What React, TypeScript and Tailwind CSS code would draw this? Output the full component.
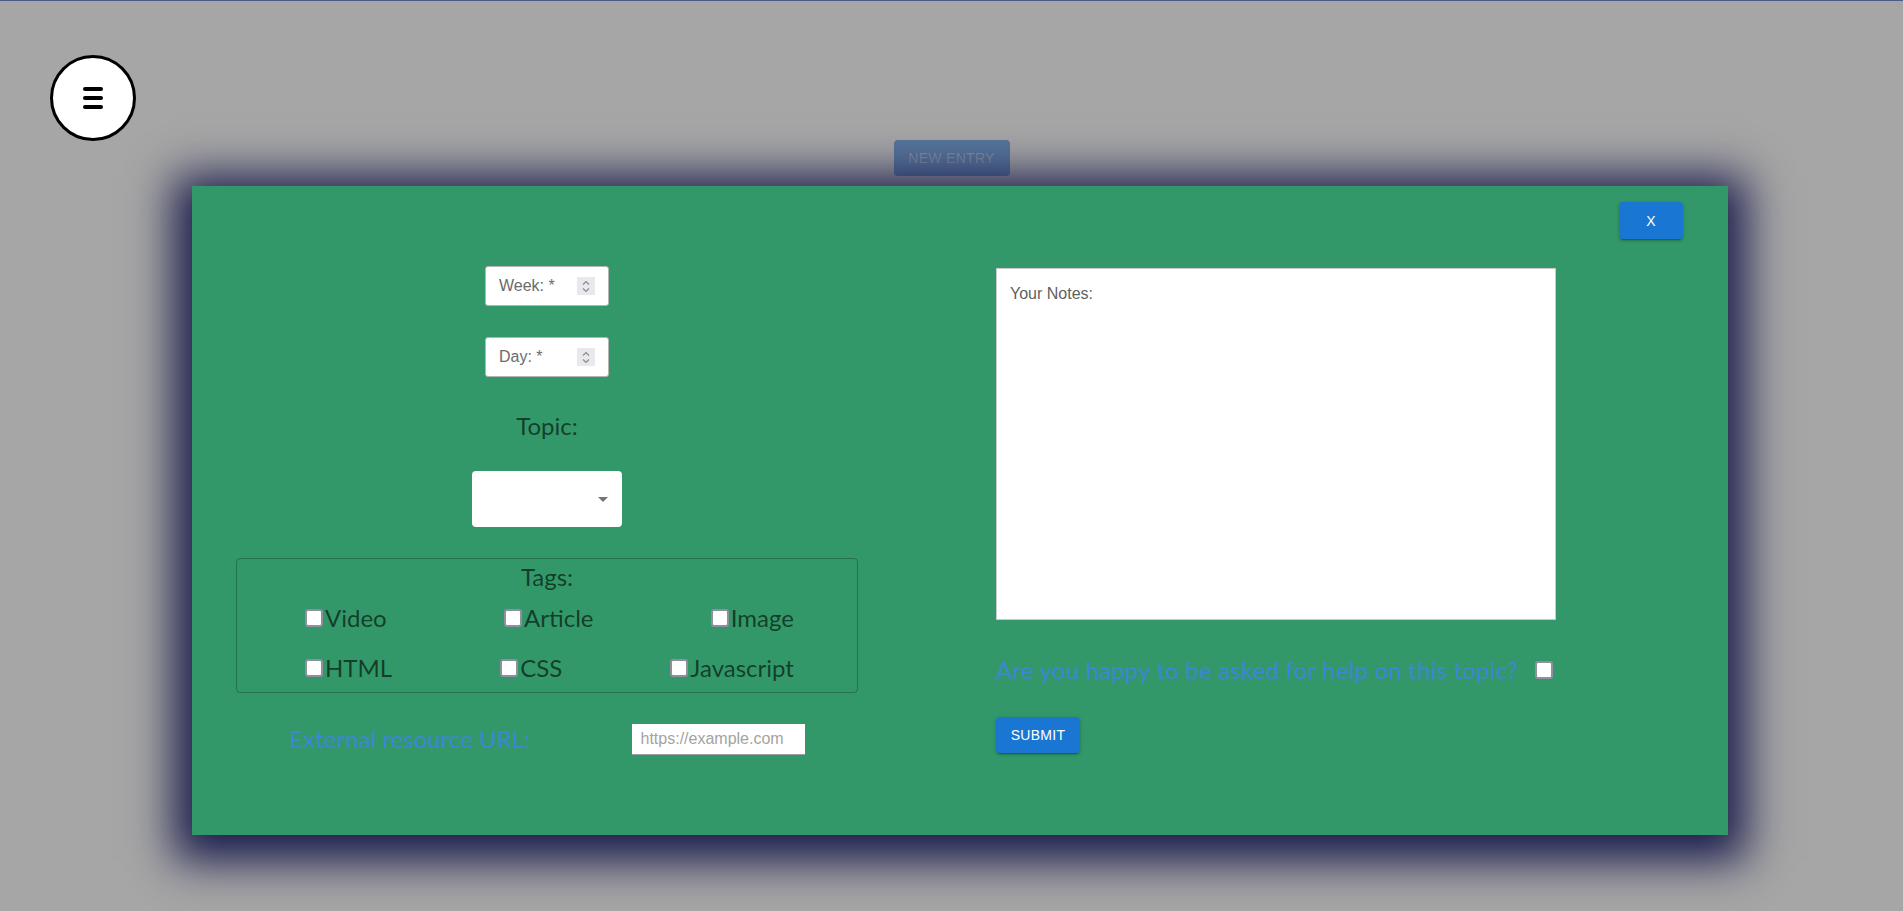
import React from 'react';

const segoe = "font-['Lato','Noto_Sans',sans-serif]";
const arial = "font-['Liberation_Sans',Arial,sans-serif]";
const muiBtn =
  "font-['Liberation_Sans',Arial,sans-serif] text-sm uppercase tracking-[0.3px] rounded bg-[#1976d2] text-white shadow-[0_3px_1px_-2px_rgba(0,0,0,0.2),0_2px_2px_0_rgba(0,0,0,0.14),0_1px_5px_0_rgba(0,0,0,0.12)]";

const Spinner = () => (
  <span className="flex h-[18px] w-[18px] items-center justify-center bg-[#e9e9ed]">
    <svg width="8" height="13" viewBox="0 0 8 13" fill="none" stroke="#8a8a8a" strokeWidth="1.2">
      <path d="M1 4.5 L4 1.5 L7 4.5" />
      <path d="M1 8.5 L4 11.5 L7 8.5" />
    </svg>
  </span>
);

const NumberField = ({ label }: { label: string }) => (
  <div className="flex h-10 w-[124px] items-center rounded-[3px] border border-[#b5b5b5] bg-white pl-[13px] pr-[13px]">
    <input
      type="text"
      placeholder={label}
      className={`${arial} w-0 flex-1 bg-transparent text-base text-[#555] placeholder:text-[#6b6b6b] outline-none`}
    />
    <Spinner />
  </div>
);

const Check = () => (
  <input
    type="checkbox"
    className="h-[18px] w-[18px] shrink-0 appearance-none rounded-[3px] border-2 border-[#8f8f9d] bg-white"
  />
);

const Tag = ({ label }: { label: string }) => (
  <label className="flex items-center">
    <Check />
    <span className="ml-[2px]">{label}</span>
  </label>
);

export default function App() {
  return (
    <div className="relative h-[911px] w-full overflow-hidden bg-[#a6a6a6]">
      <div className="h-px bg-[#4b5a82]" />

      <button className="absolute left-[50px] top-[55px] flex h-[86px] w-[86px] flex-col items-center justify-center gap-[5px] rounded-full border-[3px] border-black bg-white">
        <span className="h-1 w-5 rounded-full bg-black" />
        <span className="h-1 w-5 rounded-full bg-black" />
        <span className="h-1 w-5 rounded-full bg-black" />
      </button>

      <div className="mt-[139px] flex justify-center">
        <button className="h-9 w-[116px] rounded bg-[#57769a] font-['Liberation_Sans',Arial,sans-serif] text-sm uppercase tracking-[0.3px] text-[#8590a2]">
          New Entry
        </button>
      </div>

      <div className="absolute left-[192px] top-[186px] h-[649px] w-[1536px] bg-[#329869] shadow-[0_8px_42px_18px_rgba(26,28,76,1)]">
        <div className="flex justify-end pr-[45px] pt-4">
          <button className={`${muiBtn} h-[37px] w-16`}>X</button>
        </div>

        <div className="mt-[27px] flex">
          <div className={`${segoe} flex w-[710px] flex-col items-center text-2xl text-black/60`}>
            <NumberField label="Week: *" />
            <div className="mt-[31px]">
              <NumberField label="Day: *" />
            </div>
            <div className="mt-[34px] leading-[29px]">Topic:</div>
            <div className="mt-[31px] flex h-14 w-[150px] items-center justify-end rounded bg-white pr-[14px]">
              <svg width="10" height="5" viewBox="0 0 10 5">
                <path d="M0 0 L10 0 L5 5 Z" fill="#757575" />
              </svg>
            </div>

            <div className="mt-[31px] flex h-[135px] w-[622px] flex-col rounded border border-black/25 leading-[29px]">
              <div className="mt-[3px] text-center">Tags:</div>
              <div className="mt-3 flex justify-between pl-[68px] pr-[63px]">
                <Tag label="Video" />
                <Tag label="Article" />
                <Tag label="Image" />
              </div>
              <div className="mt-[21px] flex justify-between pl-[68px] pr-[63px]">
                <Tag label="HTML" />
                <Tag label="CSS" />
                <Tag label="Javascript" />
              </div>
            </div>

            <div className="mt-[30px] flex w-[515px] items-center justify-between">
              <span className="text-[#3d86d6]">External resource URL:</span>
              <input
                type="text"
                placeholder="https://example.com"
                className={`${arial} h-[31px] w-[173px] border-b border-[#9e9e9e] bg-white px-[9px] text-base placeholder:text-[#a3a3a3] outline-none`}
              />
            </div>
          </div>

          <div className={`${segoe} ml-[94px] flex w-[560px] flex-col items-start`}>
            <textarea
              placeholder="Your Notes:"
              className={`${arial} mt-[2px] h-[352px] w-[560px] resize-none border border-[#c8c8c8] bg-white p-[13px] text-base leading-6 placeholder:text-[#5f5f5f] outline-none`}
            />
            <div className="mt-[36px] flex items-center gap-[17px] text-2xl leading-[27px] tracking-[0.2px] text-[#3d86d6]">
              <span>Are you happy to be asked for help on this topic?</span>
              <Check />
            </div>
            <button className={`${muiBtn} mt-[34px] h-9 w-[84px]`}>Submit</button>
          </div>
        </div>
      </div>
    </div>
  );
}
